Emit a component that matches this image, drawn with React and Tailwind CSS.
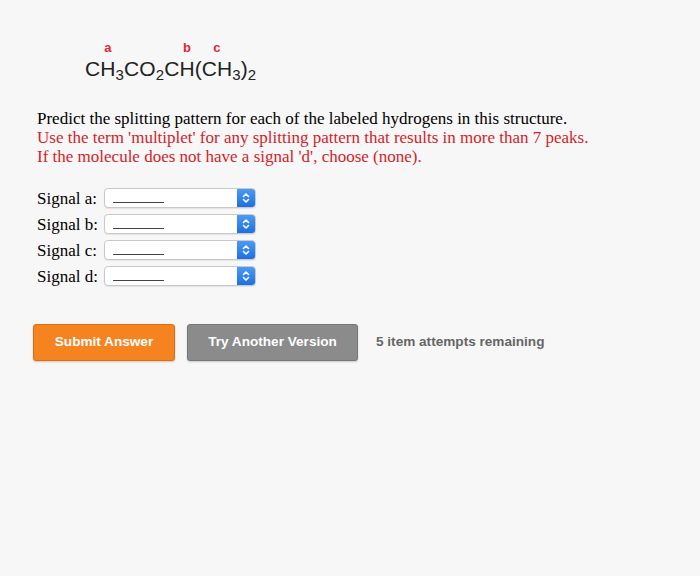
import React from 'react';

const Sub = ({ children }) => <span className="relative top-[4px] text-[15px] leading-none">{children}</span>;

const Label = ({ children }) => (
    <span className="absolute -top-[16px] left-1/2 -translate-x-1/2 text-[13px] font-bold text-[#e0262e] leading-none">{children}</span>
);

const Chevrons = () => (
    <svg width="10" height="12" viewBox="0 0 10 12" fill="none" stroke="white" strokeWidth="1.6" strokeLinecap="round" strokeLinejoin="round">
        <path d="M2.5 4.5 L5 2 L7.5 4.5" />
        <path d="M2.5 7.5 L5 10 L7.5 7.5" />
    </svg>
);

const SignalRow = ({ letter }) => (
    <div className="flex items-center h-[26px]">
        <span className="w-[67px] text-[17px] text-black">Signal {letter}:</span>
        <div className="flex w-[152px] h-[20px] rounded-[4px] border border-[#c9c9c9] bg-white shadow-[0_1px_1px_rgba(0,0,0,0.08)] overflow-hidden">
            <div className="flex-1 flex items-end pl-[8px] pb-[4px]">
                <div className="w-[51px] h-[1px] bg-[#444]" />
            </div>
            <div className="w-[18px] bg-gradient-to-b from-[#4a9bf5] to-[#1e6fe0] flex items-center justify-center">
                <Chevrons />
            </div>
        </div>
    </div>
);

const App = () => {
    return (
        <div className="w-[700px] h-[576px] bg-[#f7f7f7] relative overflow-hidden">
            <div className="pt-[58px] pl-[85px]">
                <div className="text-[21px] leading-none text-[#222] font-['Liberation_Sans',Arial,sans-serif] tracking-[0.1px]">
                    C<span className="relative">H<Label>a</Label></span><Sub>3</Sub>CO<Sub>2</Sub>C<span className="relative">H<Label>b</Label></span>(<span className="relative">CH<Label>c</Label></span><Sub>3</Sub>)<Sub>2</Sub>
                </div>
            </div>
            <div className="pl-[37px] pt-[30px] font-['Liberation_Serif','Times_New_Roman',serif] text-[17px] leading-[19px]">
                <p className="text-black">Predict the splitting pattern for each of the labeled hydrogens in this structure.</p>
                <p className="text-[#d2232a]">Use the term 'multiplet' for any splitting pattern that results in more than 7 peaks.</p>
                <p className="text-[#d2232a]">If the molecule does not have a signal 'd', choose (none).</p>
                <div className="mt-[19px] flex flex-col">
                    <SignalRow letter="a" />
                    <SignalRow letter="b" />
                    <SignalRow letter="c" />
                    <SignalRow letter="d" />
                </div>
            </div>
            <div className="pl-[33px] pt-[35px] flex items-center font-['Liberation_Sans',Arial,sans-serif]">
                <button className="w-[142px] h-[37px] rounded-[3px] bg-[#f5831f] border border-[#dd6f12] text-white text-[13.6px] font-bold shadow-[0_1px_2px_rgba(0,0,0,0.2)]">Submit Answer</button>
                <button className="ml-[12px] w-[171px] h-[37px] rounded-[3px] bg-[#8b8b8b] border border-[#777] text-white text-[13.6px] font-bold shadow-[0_1px_2px_rgba(0,0,0,0.2)]">Try Another Version</button>
                <span className="ml-[18px] text-[13.6px] font-bold text-[#666]">5 item attempts remaining</span>
            </div>
        </div>
    );
};

export default App;
